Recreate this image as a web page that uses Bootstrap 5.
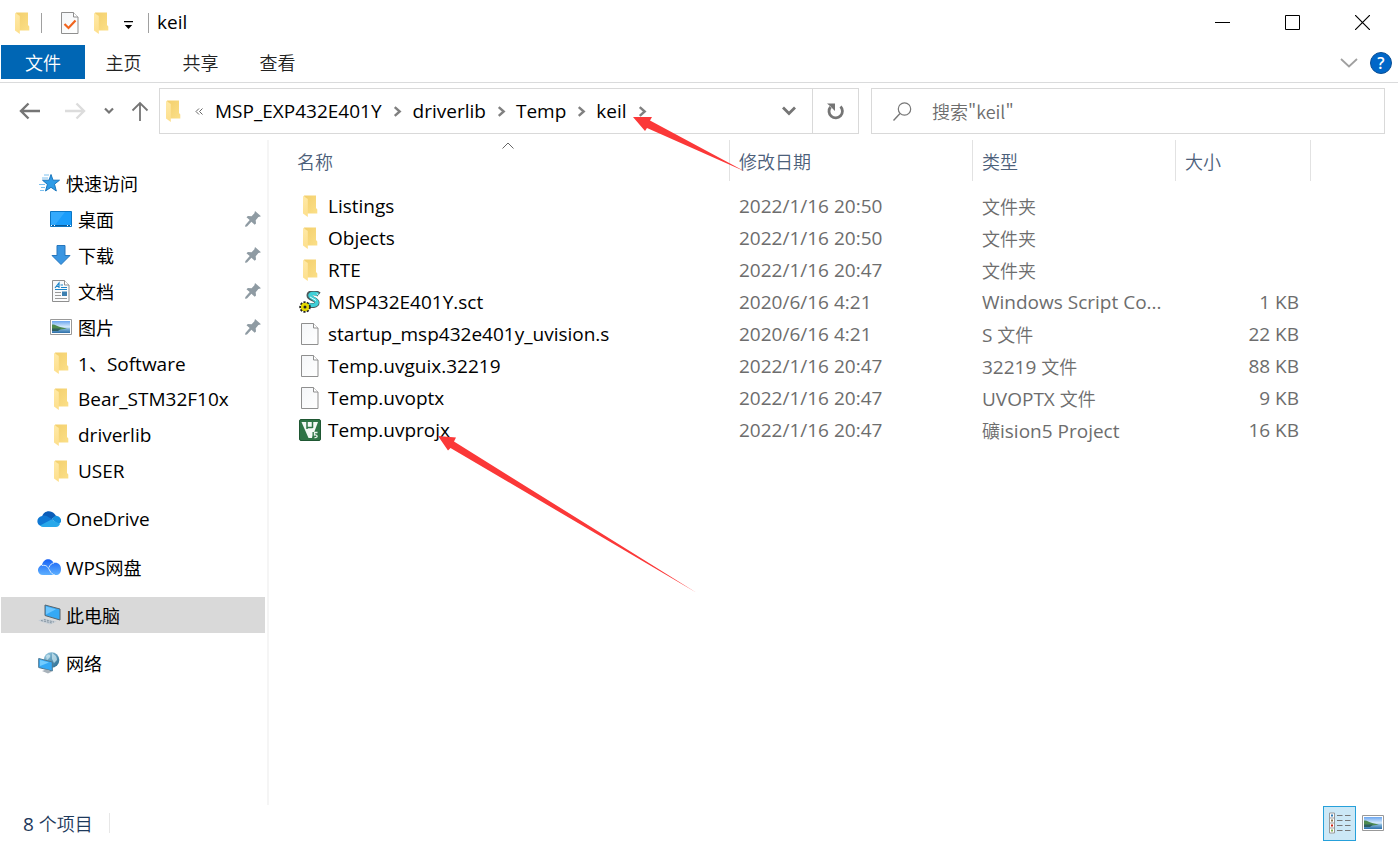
<!DOCTYPE html>
<html lang="zh-CN">
<head>
<meta charset="utf-8">
<meta name="viewport" content="width=device-width, initial-scale=1">
<title>keil</title>
<link href="https://cdn.jsdelivr.net/npm/bootstrap@5.3.0/dist/css/bootstrap.min.css" rel="stylesheet">
<style>
  body { font-family: "Open Sans", "Noto Sans CJK SC", sans-serif; font-size: 18px; line-height: 24px; color: #000; background: #fff; }
  .cjk { font-family: "Noto Sans CJK SC", sans-serif; font-weight: 350; }
  .en { font-family: "Open Sans", sans-serif; font-size: 19px; font-weight: 400; }
  a { color: inherit; text-decoration: none; }
  button { border: 0; background: none; padding: 0; color: inherit; }
  svg { display: block; flex: none; }

  .title-bar { height: 45px; padding: 0 1px 0 15px; }
  .quick { gap: 15px; }
  .v-rule { width: 1px; height: 20px; background: #a0a0a0; }
  .quick-rule { margin: 0 19px 0 11px; }
  .quick-menu { padding-top: 6px; }
  .title-text { margin-left: 8px; line-height: 22px; padding-bottom: 2px; }
  .win-btn { width: 70px; height: 45px; display: flex; align-items: center; justify-content: center; }

  .ribbon { height: 38px; border-bottom: 1px solid #dadbdc; padding: 0 6px 0 1px; }
  .ribbon-tab { height: 34px; width: 77px; line-height: 34px; text-align: center; color: #222; }
  .ribbon-tab.file { width: 84px; background: #0066b4; color: #fff; }
  .ribbon-end { height: 36px; }

  .nav-row { padding: 5px 13px 6px 19px; }
  .history { width: 140px; }
  .nav-gap { margin-left: 17px; }
  .field { height: 46px; border: 1px solid #d9d9d9; }
  .address { flex: 692 1 0; padding-left: 6px; }
  .search { flex: 491 1 0; padding-left: 21px; margin-left: 12px; }
  .search input { border: 0; outline: 0; padding: 0; color: #6d6d6d; background: none; margin-left: 20px; }
  .search input::placeholder { color: #6d6d6d; opacity: 1; }
  .crumb-more { margin: 0 12px 0 14px; }
  .crumbs li { display: flex; align-items: center; }
  .crumbs svg { margin: 0 8px; }
  .crumbs li + li svg { margin: 0 7px 0 8px; }
  .refresh { width: 46px; border-left: 1px solid #d9d9d9; }

  .side { width: 269px; border-right: 2px solid #f5f5f5; padding: 25px 2px 0 1px; }
  .side .cjk { font-weight: 400; }
  .side a { height: 36px; padding: 0 4px 0 36px; gap: 5px; display: flex; align-items: center; }
  .side a.sub { padding-left: 48px; }
  .side .apart { margin-top: 12px; }
  .side .picked { background: #d9d9d9; }
  .icon-box { width: 24px; height: 24px; display: flex; align-items: center; justify-content: center; flex: none; }

  .files { table-layout: fixed; width: 1042px; border-collapse: separate; border-spacing: 0; }
  .files th { height: 41px; padding: 1px 0 0 9px; font-weight: 350; color: #4c607a; border-right: 1px solid #e2e2e2; position: relative; }
  .files td { height: 32px; padding: 0 0 0 9px; color: #6d6d6d; white-space: nowrap; }
  .files th:first-child { padding-left: 28px; }
  .files td:first-child { padding-left: 29px; color: #000; }
  .files td:last-child { padding-right: 12px; text-align: right; }
  .files tbody::before { content: ""; display: block; height: 9px; }
  .file-name { display: flex; align-items: center; gap: 6px; }
  .c-name { width: 461px; } .c-date { width: 243px; } .c-type { width: 203px; } .c-size { width: 135px; }
  .sort { position: absolute; left: 233px; top: 2px; }

  .status { height: 37px; padding: 0 14px 1px 23px; color: #1e395b; }
  .view-on { width: 33px; height: 35px; background: #cce8f6; border: 1px solid #26a0da; display: flex; align-items: center; justify-content: center; margin-right: 6px; }
  .note { position: absolute; pointer-events: none; fill: #fb3838; }
  .note-path { left: 633px; top: 116px; }
  .note-file { left: 438px; top: 435px; }
</style>
</head>
<body>
<svg width="0" height="0" class="position-absolute" aria-hidden="true">
  <defs>
    <linearGradient id="gFold" x1="0" y1="0" x2="1" y2="1"><stop offset="0" stop-color="#f3cf6c"/><stop offset="1" stop-color="#fbdf88"/></linearGradient>
    <linearGradient id="gFlap" x1="0" y1="0" x2="0" y2="1"><stop offset="0" stop-color="#ffe9a6"/><stop offset="1" stop-color="#fddf8c"/></linearGradient>
    <linearGradient id="gPage" x1="0" y1="0" x2="1" y2="1"><stop offset="0" stop-color="#f4f6f8"/><stop offset="1" stop-color="#fff"/></linearGradient>
    <linearGradient id="gSky" x1="0" y1="0" x2="0" y2="1"><stop offset="0" stop-color="#6ba6f0"/><stop offset=".5" stop-color="#d9ecfb"/><stop offset=".65" stop-color="#7fb2d8"/><stop offset="1" stop-color="#2c6ea8"/></linearGradient>
    <linearGradient id="gWps" x1="0" y1="0" x2="0" y2="1"><stop offset="0" stop-color="#1660f5"/><stop offset="1" stop-color="#5eb0ff"/></linearGradient>
    <linearGradient id="gGlobe" x1="0" y1="0" x2="1" y2="1"><stop offset="0" stop-color="#9fd0e6"/><stop offset="1" stop-color="#1f648c"/></linearGradient>
    <symbol id="folder" viewBox="0 0 15 22"><path d="M1 .5h12V13l1.300 1.500v4H4z" fill="url(#gFold)"/><path d="M0 .8 4.800 4v18L0 18.500z" fill="url(#gFlap)"/></symbol>
    <symbol id="page" viewBox="0 0 18 22"><path d="M.5.5h12l4.500 4.500v16.500H.5z" fill="url(#gPage)" stroke="#8f8f8f"/><path d="M12.500.5V5H17" fill="#fff" stroke="#8f8f8f"/></symbol>
    <symbol id="picture" viewBox="0 0 22 16"><path d="M.5.5h21v15H.5z" fill="#fff" stroke="#999"/><path d="M2 2h18v12H2z" fill="url(#gSky)"/><path d="M2 5.500c3-.5 4 1 6 1.800 3 1 5 1.700 9 2.200L8 11H2z" fill="#4d8a4f"/><path d="M2 9.500h9L8 12H2z" fill="#2d5f60"/></symbol>
    <symbol id="pin" viewBox="0 0 16 16"><path d="M10 0l6 5.200-1.600.6-1 .2-2.700 3.300.3 3.200-1.300 1.200-3.300-2.900L2 15.500 0 15.800l.4-1.800 4.300-4.900-3.200-2.900 1.400-1.200 3.700.2 2.800-3z" fill="#8f9ba3"/></symbol>
    <symbol id="crumb" viewBox="0 0 8 10"><path d="M1.500 1 6 5 1.500 9" fill="none" stroke="#808080" stroke-width="2.200"/></symbol>
  </defs>
</svg>

<div class="position-relative min-vh-100 d-flex flex-column">
  <header>
    <div class="title-bar d-flex align-items-center">
      <svg width="15" height="22"><use href="#folder"/></svg>
      <span class="v-rule quick-rule"></span>
      <div class="quick d-flex align-items-center">
        <button type="button" aria-label="属性"><svg width="18" height="22"><use href="#page"/><path d="M3.500 12l4 4L14.500 8.500" fill="none" stroke="#f0641e" stroke-width="2.200"/></svg></button>
        <button type="button" aria-label="新建文件夹"><svg width="15" height="22"><use href="#folder"/></svg></button>
        <button type="button" class="quick-menu" aria-label="自定义快速访问工具栏"><svg width="9" height="9" viewBox="0 0 9 9"><path d="M0 0h9v1.300H0zM.8 4h7.400L4.500 8z"/></svg></button>
        <span class="v-rule"></span>
      </div>
      <span class="en title-text">keil</span>
      <div class="ms-auto d-flex">
        <button type="button" class="win-btn" aria-label="最小化"><svg width="15" height="15"><path d="M0 7.500h15" stroke="#000"/></svg></button>
        <button type="button" class="win-btn" aria-label="最大化"><svg width="15" height="15"><path d="M.5.5h14v14H.5z" fill="none" stroke="#000"/></svg></button>
        <button type="button" class="win-btn" aria-label="关闭"><svg width="15" height="15"><path d="M0 0l15 15M15 0 0 15" stroke="#000" stroke-width="1.200"/></svg></button>
      </div>
    </div>
    <nav class="ribbon d-flex cjk">
      <a href="#" class="ribbon-tab file">文件</a>
      <a href="#" class="ribbon-tab">主页</a>
      <a href="#" class="ribbon-tab">共享</a>
      <a href="#" class="ribbon-tab">查看</a>
      <div class="ribbon-end ms-auto d-flex align-items-center gap-2">
        <button type="button" aria-label="展开功能区" class="me-1"><svg width="18" height="10"><path d="M1 1l8 7.500L17 1" fill="none" stroke="#a0a0a0" stroke-width="1.800"/></svg></button>
        <button type="button" aria-label="帮助"><svg width="22" height="22" class="overflow-visible"><circle cx="11" cy="11" r="10.500" fill="#0067c8" stroke="#0a4f96"/><text x="11" y="17" text-anchor="middle" font-size="16" font-weight="600" font-family="Open Sans" fill="#fff">?</text></svg></button>
      </div>
    </nav>
  </header>

  <div class="nav-row d-flex align-items-center">
    <div class="history d-flex align-items-center">
      <button type="button" aria-label="后退"><svg width="22" height="18"><path d="M21 9H2M9.500 1.500 2 9l7.500 7.500" fill="none" stroke="#757575" stroke-width="2.400"/></svg></button>
      <button type="button" aria-label="前进" class="ms-4"><svg width="22" height="18"><path d="M0 9h19M11.500 1.500 19 9l-7.500 7.500" fill="none" stroke="#dcdcdc" stroke-width="2.400"/></svg></button>
      <button type="button" aria-label="最近浏览的位置" class="nav-gap"><svg width="10" height="8"><path d="M1 1.500 5 5.500 9 1.500" fill="none" stroke="#757575" stroke-width="2.200"/></svg></button>
      <button type="button" aria-label="上移" class="nav-gap"><svg width="18" height="20"><path d="M9 20V2M1.500 9.500 9 2l7.500 7.500" fill="none" stroke="#757575" stroke-width="1.800"/></svg></button>
    </div>
    <div class="field address d-flex">
      <div class="d-flex align-items-center flex-grow-1">
        <svg width="15" height="22"><use href="#folder"/></svg>
        <svg class="crumb-more" width="8" height="7"><path d="M4 .5 1 3.500l3 3M7.500.5l-3 3 3 3" fill="none" stroke="#666"/></svg>
        <ol class="crumbs list-unstyled d-flex mb-0 en">
          <li><a href="#">MSP_EXP432E401Y</a><svg width="15" height="11"><use href="#crumb"/></svg></li>
          <li><a href="#">driverlib</a><svg width="15" height="11"><use href="#crumb"/></svg></li>
          <li><a href="#">Temp</a><svg width="15" height="11"><use href="#crumb"/></svg></li>
          <li><a href="#">keil</a><svg width="15" height="11"><use href="#crumb"/></svg></li>
        </ol>
        <button type="button" aria-label="以前的位置" class="ms-auto me-3"><svg width="14" height="10"><path d="M1 1.500l6 6 6-6" fill="none" stroke="#757575" stroke-width="2.800"/></svg></button>
      </div>
      <button type="button" class="refresh d-flex align-items-center justify-content-center" aria-label="刷新"><svg width="17" height="17"><path d="M13.500 3.500A6.700 6.700 0 1 1 3.500 4" fill="none" stroke="#757575" stroke-width="2.800"/><path d="M0 .5h8v7.500L5.500 5.500 3 3z" fill="#757575"/></svg></button>
    </div>
    <label class="field search d-flex align-items-center">
      <svg width="19" height="19"><circle cx="11.500" cy="7" r="6.200" fill="none" stroke="#777" stroke-width="1.200"/><path d="M7 11.500.5 18.500" stroke="#777" stroke-width="1.400"/></svg>
      <input type="search" class="cjk flex-grow-1" aria-label="搜索" placeholder='搜索"keil"'>
    </label>
  </div>

  <div class="d-flex flex-grow-1">
    <nav class="side flex-shrink-0">
      <a href="#"><span class="icon-box"><svg width="24" height="20" viewBox="0 0 24 20"><path d="M14 1.500l2 5.700H22.500l-5 4 1.800 6.800L14 14.300 8.500 18l1.900-6.600L5.500 7.200h6.500z" fill="#2e9be6" stroke="#1976bd"/><path d="M7 2h5M5 5h6M2 11.500h6M4 14.500h4M3 17.500h4" stroke="#7cc0ef"/></svg></span><span class="cjk">快速访问</span></a>
      <a href="#" class="sub"><span class="icon-box"><svg width="22" height="16"><path d="M.5.5h21v15H.5z" fill="#1a9dfb" stroke="#0c76c4"/><path d="M1 1h14L5 14H1z" fill="#45b2ff" opacity=".6"/><path d="M1 14.500h20" stroke="#0a5a99"/><path d="M1 14.500h1M4 14.500h1M17 14.500h1M20 14.500h1" stroke="#fff"/></svg></span><span class="cjk">桌面</span><svg class="ms-auto" width="16" height="16"><use href="#pin"/></svg></a>
      <a href="#" class="sub"><span class="icon-box"><svg width="20" height="20"><path d="M6 .5h8v10h5l-9 9-9-9h5z" fill="#3a96e2" stroke="#2777bd"/></svg></span><span class="cjk">下载</span><svg class="ms-auto" width="16" height="16"><use href="#pin"/></svg></a>
      <a href="#" class="sub"><span class="icon-box"><svg width="18" height="22"><use href="#page"/><path d="M8.500 5H11M9 7.500h6M3 9.500h12" stroke="#1c84c9" stroke-width="1.200"/><path d="M3 8l4-5v5M4.500 6.500H7" fill="none" stroke="#1c84c9" stroke-width="1.200"/><path d="M3 12.500h6M3 15.500h6M3 18.500h12" stroke="#999"/><path d="M10 11.500h5V16h-5z" fill="#3d7fb0"/></svg></span><span class="cjk">文档</span><svg class="ms-auto" width="16" height="16"><use href="#pin"/></svg></a>
      <a href="#" class="sub"><span class="icon-box"><svg width="22" height="16"><use href="#picture"/></svg></span><span class="cjk">图片</span><svg class="ms-auto" width="16" height="16"><use href="#pin"/></svg></a>
      <a href="#" class="sub"><span class="icon-box"><svg width="15" height="22"><use href="#folder"/></svg></span><span><span class="en">1</span><span class="cjk">、</span><span class="en">Software</span></span></a>
      <a href="#" class="sub"><span class="icon-box"><svg width="15" height="22"><use href="#folder"/></svg></span><span class="en">Bear_STM32F10x</span></a>
      <a href="#" class="sub"><span class="icon-box"><svg width="15" height="22"><use href="#folder"/></svg></span><span class="en">driverlib</span></a>
      <a href="#" class="sub"><span class="icon-box"><svg width="15" height="22"><use href="#folder"/></svg></span><span class="en">USER</span></a>
      <a href="#" class="apart"><span class="icon-box"><svg width="24" height="16"><path d="M5 6C6 1 11-1 15 1c2 1 3 2 4 4l-7 5z" fill="#0a5cb8"/><path d="M5 5c3-1 5 0 7 1.500L17 9 4 15C-1 14-1 6 5 5z" fill="#0f78d4"/><path d="M15 8c2-3 4-3.500 5-3 4 1 4.500 4 4 6l-3 3z" fill="#1490df"/><path d="M3 14.500 14.500 8.500 23 13c-1 2-2 3-4 3H6c-1 0-2-.5-3-1.500z" fill="#28a8ea"/></svg></span><span class="en">OneDrive</span></a>
      <a href="#" class="apart"><span class="icon-box"><svg width="23" height="16"><path d="M4 6c1-5 5-6.500 8-5.500 2 .7 3 2 3.500 3.500C20 3 23 6 23 10s-2 6-5 6H5c-6 0-7-8-1-10z" fill="url(#gWps)"/><path d="M4 6.500c5-1 6 2 8 5.500 1 2 2.500 3.500 5 4M11 8.500c1-3 3-4.500 5-4.500" fill="none" stroke="#d6eaff" stroke-width="1"/></svg></span><span><span class="en">WPS</span><span class="cjk">网盘</span></span></a>
      <a href="#" class="apart picked"><span class="icon-box"><svg width="24" height="22"><path d="M8 1l15 4v11L8 11.500z" fill="#35a9f5" stroke="#58656e"/><path d="M9 2.500l10 2.700L9 10.500z" fill="#6cc6ff"/><path d="M1 16.500l6-2 13 3-7 3z" fill="#c5ced6"/><path d="M4 16.500l11 2.500M7 15.500l10 2.500" stroke="#8797a3" stroke-dasharray="2 1"/></svg></span><span class="cjk">此电脑</span></a>
      <a href="#" class="apart"><span class="icon-box"><svg width="22" height="22"><circle cx="13.500" cy="8" r="7.800" fill="url(#gGlobe)"/><path d="M8 4c3-3 5-1 4 1s-3 2-3 4M14 1c3 2 5 3 5 7l-3 3-2-4z" fill="#d2ebf3" opacity=".7"/><path d="M.7 6.500l13.600 3.500v9L.7 15.500z" fill="#35a9f5" stroke="#4f7890"/><path d="M2 8l9 2.500L2 14z" fill="#72ccff"/><path d="M4 19l4-1.500 6 2-4 2z" fill="#a8b2ba"/></svg></span><span class="cjk">网络</span></a>
    </nav>

    <main class="flex-grow-1">
      <table class="files">
        <colgroup><col class="c-name"><col class="c-date"><col class="c-type"><col class="c-size"></colgroup>
        <thead class="cjk"><tr>
          <th scope="col">名称<svg class="sort" width="12" height="7"><path d="M.5 6.500 6 1l5.500 5.500" fill="none" stroke="#666"/></svg></th>
          <th scope="col">修改日期</th><th scope="col">类型</th><th scope="col">大小</th>
        </tr></thead>
        <tbody>
          <tr><td><div class="file-name"><span class="icon-box"><svg width="15" height="22"><use href="#folder"/></svg></span><a href="#" class="en">Listings</a></div></td><td class="en">2022/1/16 20:50</td><td class="cjk">文件夹</td><td></td></tr>
          <tr><td><div class="file-name"><span class="icon-box"><svg width="15" height="22"><use href="#folder"/></svg></span><a href="#" class="en">Objects</a></div></td><td class="en">2022/1/16 20:50</td><td class="cjk">文件夹</td><td></td></tr>
          <tr><td><div class="file-name"><span class="icon-box"><svg width="15" height="22"><use href="#folder"/></svg></span><a href="#" class="en">RTE</a></div></td><td class="en">2022/1/16 20:47</td><td class="cjk">文件夹</td><td></td></tr>
          <tr><td><div class="file-name"><span class="icon-box"><svg width="22" height="22"><path d="M20 3.500C17 1 10 1 10 4.500S18 8 18 11.500 12 15 9 14" fill="none" stroke="#4c5a5c" stroke-width="5"/><path d="M19 3.500C17 2 11 2 11 4.500S18 8 18 11.500 12 14.500 9 13.500" fill="none" stroke="#3fd0d8" stroke-width="3.600"/><path d="M18 2.500 20 5M11 6l6 3.500" stroke="#e8ffff" stroke-width="1"/><circle cx="6" cy="16" r="4.500" fill="#e4d800" stroke="#222" stroke-width="2.500" stroke-dasharray="2 1.200"/><circle cx="6" cy="16" r="4" fill="#e4d800"/><circle cx="6" cy="16" r="1.500" fill="#222"/></svg></span><a href="#" class="en">MSP432E401Y.sct</a></div></td><td class="en">2020/6/16 4:21</td><td class="en">Windows Script Co...</td><td class="en">1 KB</td></tr>
          <tr><td><div class="file-name"><span class="icon-box"><svg width="18" height="22"><use href="#page"/></svg></span><a href="#" class="en">startup_msp432e401y_uvision.s</a></div></td><td class="en">2020/6/16 4:21</td><td class="cjk"><span class="en">S </span>文件</td><td class="en">22 KB</td></tr>
          <tr><td><div class="file-name"><span class="icon-box"><svg width="18" height="22"><use href="#page"/></svg></span><a href="#" class="en">Temp.uvguix.32219</a></div></td><td class="en">2022/1/16 20:47</td><td class="cjk"><span class="en">32219 </span>文件</td><td class="en">88 KB</td></tr>
          <tr><td><div class="file-name"><span class="icon-box"><svg width="18" height="22"><use href="#page"/></svg></span><a href="#" class="en">Temp.uvoptx</a></div></td><td class="en">2022/1/16 20:47</td><td class="cjk"><span class="en">UVOPTX </span>文件</td><td class="en">9 KB</td></tr>
          <tr><td><div class="file-name"><span class="icon-box"><svg width="22" height="22"><rect x=".5" y=".5" width="21" height="21" rx="1.500" fill="#2f7547" stroke="#1f5733"/><path d="M2.500 3h16.500L13 19h-3.500z" fill="#f4faf6"/><path d="M8 3v7M8 8.500h5.500M13.500 3v6" fill="none" stroke="#2f7547" stroke-width="1.500"/><path d="M13.500 13h6v7h-6z" fill="#2f7547"/><path d="M18.500 13.500H15.500V16c3.500-.5 3.500 3 0 2.500" fill="none" stroke="#e9f3ec" stroke-width="1.300"/></svg></span><a href="#" class="en">Temp.uvprojx</a></div></td><td class="en">2022/1/16 20:47</td><td class="cjk">礦<span class="en">ision5 Project</span></td><td class="en">16 KB</td></tr>
        </tbody>
      </table>
    </main>
  </div>

  <footer class="status d-flex align-items-center">
    <span class="cjk"><span class="en">8 </span>个项目</span>
    <span class="v-rule ms-3 opacity-25"></span>
    <button type="button" class="view-on ms-auto" aria-label="详细信息"><svg width="22" height="22"><path d="M.5 1h5v20h-5zM.5 6h5M.5 11h5M.5 16h5" fill="#fff" stroke="#999"/><path d="M2 3.500h2" stroke="#2d7bb8" stroke-width="2"/><path d="M2 8.500h2" stroke="#8a7a50" stroke-width="2"/><path d="M2 13.500h2" stroke="#d02010" stroke-width="2"/><path d="M2 18.500h2" stroke="#80b050" stroke-width="2"/><path d="M8 3.500h5.500M16 3.500h5.500M8 8.500h5.500M16 8.500h5.500M8 13.500h5.500M16 13.500h5.500M8 18.500h5.500M16 18.500h5.500" stroke="#777"/></svg></button>
    <button type="button" aria-label="大缩略图"><svg width="22" height="16"><use href="#picture"/></svg></button>
  </footer>

  <svg class="note note-path" width="113" height="57" aria-hidden="true"><path d="M0 1h19l-2 3.500L112 55.500 14 12l-2 3z"/></svg>
  <svg class="note note-file" width="260" height="159" aria-hidden="true"><path d="M0 1l18 1.500-2 4L259 158 12.500 13 10 15.500z"/></svg>
</div>
<script src="https://cdn.jsdelivr.net/npm/bootstrap@5.3.0/dist/js/bootstrap.bundle.min.js"></script>
</body>
</html>
